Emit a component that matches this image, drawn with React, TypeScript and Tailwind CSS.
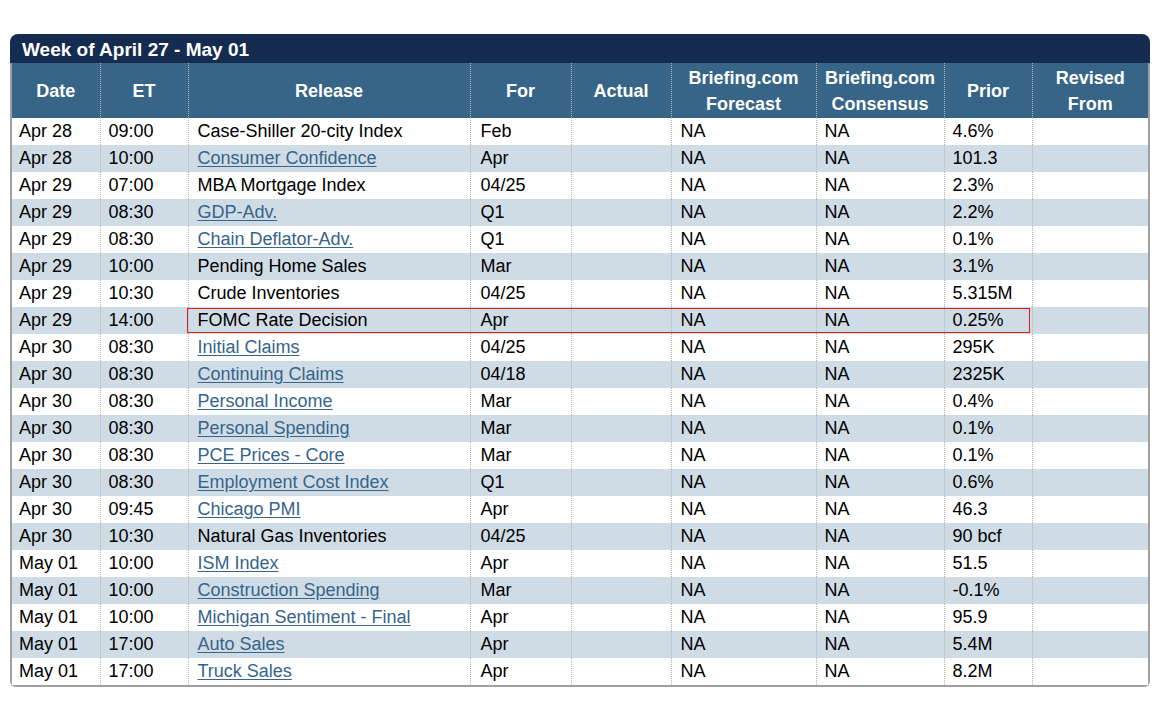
import React from "react";

const rows: [string, string, string, boolean, string, string][] = [
  ["Apr 28", "09:00", "Case-Shiller 20-city Index", false, "Feb", "4.6%"],
  ["Apr 28", "10:00", "Consumer Confidence", true, "Apr", "101.3"],
  ["Apr 29", "07:00", "MBA Mortgage Index", false, "04/25", "2.3%"],
  ["Apr 29", "08:30", "GDP-Adv.", true, "Q1", "2.2%"],
  ["Apr 29", "08:30", "Chain Deflator-Adv.", true, "Q1", "0.1%"],
  ["Apr 29", "10:00", "Pending Home Sales", false, "Mar", "3.1%"],
  ["Apr 29", "10:30", "Crude Inventories", false, "04/25", "5.315M"],
  ["Apr 29", "14:00", "FOMC Rate Decision", false, "Apr", "0.25%"],
  ["Apr 30", "08:30", "Initial Claims", true, "04/25", "295K"],
  ["Apr 30", "08:30", "Continuing Claims", true, "04/18", "2325K"],
  ["Apr 30", "08:30", "Personal Income", true, "Mar", "0.4%"],
  ["Apr 30", "08:30", "Personal Spending", true, "Mar", "0.1%"],
  ["Apr 30", "08:30", "PCE Prices - Core", true, "Mar", "0.1%"],
  ["Apr 30", "08:30", "Employment Cost Index", true, "Q1", "0.6%"],
  ["Apr 30", "09:45", "Chicago PMI", true, "Apr", "46.3"],
  ["Apr 30", "10:30", "Natural Gas Inventories", false, "04/25", "90 bcf"],
  ["May 01", "10:00", "ISM Index", true, "Apr", "51.5"],
  ["May 01", "10:00", "Construction Spending", true, "Mar", "-0.1%"],
  ["May 01", "10:00", "Michigan Sentiment - Final", true, "Apr", "95.9"],
  ["May 01", "17:00", "Auto Sales", true, "Apr", "5.4M"],
  ["May 01", "17:00", "Truck Sales", true, "Apr", "8.2M"],
];

const widths = [88, 88, 282, 101, 100, 145, 128, 88, 116];
const sep = "border-r border-dotted border-[#b5b5b5]";

export default function App() {
  return (
    <div className="bg-white w-[1175px] h-[713px] pt-[34px] pl-[10px]" style={{ fontFamily: '"Liberation Sans", Arial, sans-serif' }}>
      <div className="relative w-[1140px]">
        <div className="bg-[#152b50] text-white font-bold text-[19px] h-[29px] leading-[31px] pl-[12px] rounded-tl-[8px] rounded-tr-[8px]">
          Week of April 27 - May 01
        </div>
        <div className="border-l-2 border-r-2 border-b-2 border-[#a0a0a0] rounded-b-[6px]">
          <table className="border-collapse table-fixed w-full text-[18px] text-black">
            <colgroup>
              {widths.map((w, i) => (
                <col key={i} style={{ width: w }} />
              ))}
            </colgroup>
            <thead>
              <tr className="bg-[#366588] text-white font-bold h-[55px] leading-[26px]">
                {["Date", "ET", "Release", "For", "Actual", "Briefing.com Forecast", "Briefing.com Consensus", "Prior", "Revised From"].map((h, i) => (
                  <th key={h} className={`text-center font-bold px-0 ${i < 8 ? sep : ""}`}>
                    {h.includes(" ") && i >= 5 ? (
                      <>
                        {h.split(" ")[0]}
                        <br />
                        {h.split(" ")[1]}
                      </>
                    ) : (
                      h
                    )}
                  </th>
                ))}
              </tr>
            </thead>
            <tbody>
              {rows.map((r, idx) => (
                <tr key={idx} className={`h-[27px] leading-[27px] ${idx % 2 ? "bg-[#d0dce5]" : "bg-white"}`}>
                  <td className={`pl-[7px] ${sep}`}>{r[0]}</td>
                  <td className={`pl-[8px] ${sep}`}>{r[1]}</td>
                  <td className={`pl-[9px] whitespace-nowrap ${sep}`}>
                    {r[3] ? <span className="text-[#36648b] underline underline-offset-[2px]">{r[2]}</span> : r[2]}
                  </td>
                  <td className={`pl-[10px] ${sep}`}>{r[4]}</td>
                  <td className={sep}></td>
                  <td className={`pl-[9px] ${sep}`}>NA</td>
                  <td className={`pl-[8px] ${sep}`}>NA</td>
                  <td className={`pl-[8px] ${sep}`}>{r[5]}</td>
                  <td></td>
                </tr>
              ))}
            </tbody>
          </table>
        </div>
        <div className="absolute left-[177px] top-[274px] w-[843px] h-[25px] border border-[#e02020] pointer-events-none"></div>
      </div>
    </div>
  );
}
